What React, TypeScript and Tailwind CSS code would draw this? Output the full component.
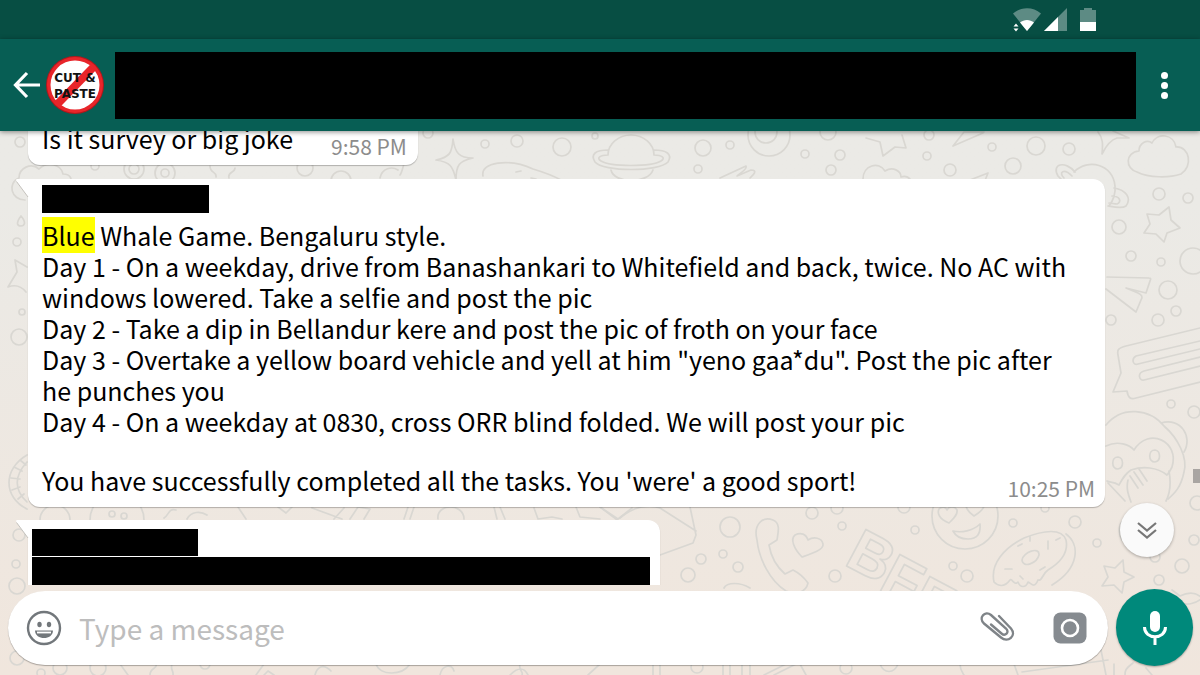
import { useState } from 'react';

const DOTS = [
  [20, 142, 5], [305, 168, 8], [341, 181, 10], [95, 166, 4], [428, 133, 5], [485, 144, 4], [517, 141, 6],
  [562, 147, 9], [595, 136, 3], [703, 148, 8], [730, 145, 4], [698, 169, 4], [769, 135, 21], [766, 132, 11],
  [828, 132, 8], [805, 154, 4], [840, 155, 5], [831, 170, 5], [929, 135, 5], [927, 156, 4], [992, 147, 4],
  [1036, 146, 9], [1069, 149, 6], [1013, 166, 8], [950, 170, 6], [1159, 194, 6], [1188, 198, 5], [1119, 227, 7],
  [1131, 256, 5], [1161, 262, 4], [1193, 261, 13], [1168, 290, 9], [1176, 311, 5], [1158, 320, 6], [1111, 320, 5],
  [1171, 404, 4], [1194, 412, 6], [812, 513, 6], [837, 508, 6], [842, 526, 4], [915, 530, 4], [904, 507, 6],
  [1013, 523, 4], [1075, 522, 6], [1097, 543, 4], [953, 566, 4], [967, 576, 6], [835, 576, 6], [1194, 540, 5],
  [1182, 566, 7], [1159, 580, 5], [1197, 503, 7], [1155, 557, 5], [1045, 508, 4], [19, 535, 6], [16, 564, 4],
  [17, 586, 8], [17, 658, 7], [60, 668, 7], [98, 668, 8], [41, 673, 4], [55, 520, 15], [117, 520, 27],
  [112, 514, 3], [124, 516, 3], [17, 242, 4], [22, 312, 3], [19, 337, 8], [730, 527, 10], [701, 559, 5],
  [688, 575, 7], [723, 554, 4], [738, 567, 5], [134, 169, 10], [134, 169, 5], [165, 173, 10], [165, 173, 4],
  [965, 516, 33], [846, 668, 6], [697, 667, 6], [205, 664, 5],
];

const DOODLES = [
  // clouds
  'M25 200c-14 0-18-17-6-22 0-10 12-16 20-9 8-8 22-5 24 5 8 0 10 6 6 10',
  'M1137 172c-12-3-12-20 2-21 0-8 8-12 13-8 5-11 22-9 24 4 14-1 17 20 5 27-12 4-32 4-44-2z',
  'M863 179c0-14 16-18 22-8 8-5 16 0 16 6 5-2 9 1 10 4',
  // planets
  'M608 155a23 20 0 0 1 46 0M608 150c-12 0-18 4-13 12 8 10 64 10 73 0 5-8-2-12-14-12M608 155c-8 0-12 3-7 6 10 6 50 6 60 0 5-3 1-6-7-6M611 170c3 14 37 14 42 0',
  'M1074 172c14-14 39-8 41 14 1 10-3 16-6 20M1075 172c-10-12-24-8-17 4 3 4 6 6 10 8M1114 188c12 2 18 10 12 18-4 3-12 1-18 0M1072 176c-8-8-14-4-8 2M1112 196c8 0 10 6 5 8-3 0-5-1-8-1',
  // sparkles and stars
  'M453 139c2 14 6 19 20 19-14 3-17 7-17 22-3-14-6-18-20-20 14-3 16-7 17-21z',
  'M866 138l14 4 3 14 12-9 11 1-4-13M953 146l11-14 20 0M953 146l30-13M1098 132c5 6 5 12 4 22 4-8 8-14 15-16h12l-16-7',
  'M1147 214l12 1 10-8 2 13 9 8-13 5-3 9-8-8-12-1 6-9z',
  'M27 267l-12-7 2 12-9 15c8-3 14 0 18 5',
  'M1104 566l11 2 8-8 1 12 10 5-10 5-2 11-8-8-12 1 6-9z',
  'M400 175c2-2 5-15 7-24',
  'M483 176c-3-14 26-18 50-7 10 3 19 6 28 11M516 172l5-1M531 178l5 1',
  'M720 178l26-12c2 3-6 7-9 10l14-6c8 0 1 6-1 8',
  'M970 180l18-7-4 10',
  'M210 166c0 8 7 5 6 11M235 168c0 5-8 4-6 10M380 178c2-10 12-12 18-8',
  // wedge and comb
  'M1107 277l42 1c2 0 2 1 1 3l-4 12-20-5 12 5c4 2 5 4 3 7l-5 12-30-23',
  'M1200 328l-74 18c-8 2-9 4-8 9l3 18-8 19 14-1c1 6 3 9 9 7l64-16M1200 341l-64 15c-5 3-3 10 2 8l62-15M1200 357l-56 14c-7 2-5 10 0 9l56-14',
  // monkey
  'M1106 425c16-20 44-16 58 1 14 12 24 32 20 46-3 15-9 21-16 27M1161 423c20-6 32 14 23 29M1106 446c12-6 24-1 28 4 15-24 46-8 38 17-3 6-4 7-5 8-10-8-24-9-36-5-6 4-8 8-12 15-6-4-9-2-12-4',
  'M1118 457c-7 0-7 12 0 12 6-1 6-11 0-12zM1155 450c-7 0-7 12 0 12 6-1 6-11 0-12zM1130 476l8 12M1134 472l9 13M1139 469l8 12M1169 471c3 16 0 24-3 30M1128 480c-2 8 0 14 3 22M1108 483l17 18M1126 520c-8 0-8 14-4 20',
  // smiley with heart eyes
  'M949 523c-10-4-12-10-10-14 3-3 7-2 8 1 2-4 8-4 10 0 1 5-4 9-8 13zM974 516c-6-4-10-10-7-14 4-2 7 0 8 3 3-4 8-3 9 1-1 4-5 7-10 10zM953 531c8 2 20 0 27-7 1 10-3 15-12 15-8 0-13-4-15-8z',
  // doughnut
  'M994 582c-4-18 10-34 30-44 20-8 38-10 42 2 3 14-8 24-18 30-6 4-6 12-10 10-4 10-8 2-10 2-2 6-8 6-10 0-4 4-6-4-8-2-6 8-12 6-16 2zM1066 534c14 10 14 34-14 51M1022 560c1-8 18-14 17-5-2 8-16 14-17 5zM1018 546l4-2M1012 569h-7M1030 541v-5M1048 549v-8M1056 540l4-2M1040 570l5-3M1020 576l3 3',
  // telephone
  'M757 540c-4-16 6-24 16-20 8 3 5 13 4 20l-8 5c2 12 8 22 16 29l8-4c6 3 10 6 15 13-2 9-12 13-22 8-16-10-27-32-29-51z',
  'M802 557c-8-8-12-18-7-22 6-3 11-1 13 5 6-4 14-2 15 4 1 6-12 10-21 13z',
  // envelope
  'M600 507l20 15M620 518c14-12 30-14 40-10l36 23M690 507l6 28-3 8-33 12',
  // bits behind and below the composer
  'M724 588c3-6 16-6 26 0M653 664v11M660 664v11M723 664v11M730 664v11M742 664v11M750 664v11M764 675l22-11M774 675l22-11M800 664l6 11M880 664c4 10 14 10 18 0',
  'M960 664c0 6 2 8 4 11M1014 664l4 11M1022 672l86-12M1100 645l6 30M1114 664v11M1172 590l8 6c8-4 16-4 22 2-6 6-16 8-24 4M1133 663c-8 6-8 8-8 12M1146 668l6 7',
  'M150 675c0-8 8-6 6-11M172 664c-2 6 2 7 1 11M256 675l8-11M264 675l4-4 6 4M315 675c2-8 8-12 16-4M120 664l8 11M376 664c4 12 26 12 34 0M440 675c2-10 12-12 14-4M520 664c-2 6 4 8 2 11M510 675c8-8 14-8 18 0M600 664l-12 11',
  'M164 518c6-4 4-10 12-8M187 519c4-8 14-8 20-4M238 507l8 12M278 507l8 6 6-6M312 508l30 11M344 508l-10 11M350 519l8-12 12 2-6 10M408 507l-4 12M414 507l-4 12M438 519c-2-16 26-16 26 0M494 507l3 12M500 507l5 12M534 508l4 11 14-2 10 2M576 507l4 10 20 2M600 507l18 12 14-11',
  // drum rim
  'M27 455c-24 14-24 42 0 54M27 462c-13 14-13 28 0 40M20 460l6 5M14 467l8 4M11 478l9 1M12 490l8-3M18 499l6-5M21 216c-6 8-3 10 0 10s6-3 0-10z',
];

const Wallpaper = () => (
  <svg
    aria-hidden="true"
    className="absolute inset-0 h-full w-full"
    viewBox="0 0 1200 675"
    preserveAspectRatio="xMidYMid slice"
    fill="none"
    stroke="#d9d7d2"
    strokeWidth="1.7"
    strokeLinecap="round"
    strokeLinejoin="round"
  >
    {DOTS.map(([cx, cy, r]) => (
      <circle key={`${cx}-${cy}-${r}`} cx={cx} cy={cy} r={r} />
    ))}
    {DOODLES.map((d) => (
      <path key={d} d={d} />
    ))}
    <g fontFamily="Liberation Sans, sans-serif" fontWeight="700" fontSize="60">
      <text x="843" y="564" transform="rotate(28 843 564)">B</text>
      <text x="877" y="589" transform="rotate(28 877 589)">F</text>
      <text x="907" y="611" transform="rotate(28 907 611)">F</text>
    </g>
  </svg>
);

const StatusBar = () => (
  <div className="flex h-[39px] items-start justify-end bg-[#074e43] pt-2 pr-[104px]">
    <svg className="h-6 w-[83px]" viewBox="0 0 83 24" fill="#fff" aria-label="Wi-Fi, signal and battery">
      <path d="M0 5.500C8-1.500 20-1.500 28 5.500L14 23z" opacity=".35" />
      <path d="M7 14.500C11 11 17 11 21 14.500L14 23z" />
      <path d="M.500 18.500h5L3 15.500zM.500 20.500h5L3 23.500z" />
      <path d="M54 0v23H31z" opacity=".35" />
      <path d="M45 9v14H31z" />
      <path d="M67 2h4V0h8v2h4v12H67z" opacity=".35" />
      <path d="M67 14h16v9H67z" />
    </svg>
  </div>
);

const GroupAvatar = () => (
  <svg className="size-[58px] shrink-0" viewBox="0 0 58 58" role="img" aria-label="Cut and paste">
    <circle cx="29" cy="29" r="29" fill="#b3161b" />
    <circle cx="29" cy="29" r="28" fill="#e8252a" />
    <circle cx="29" cy="29" r="24.500" fill="#fff" />
    <path d="M11.500 48L47 11.500" stroke="#e8252a" strokeWidth="8" />
    <g fontFamily="DejaVu Sans, sans-serif" fontWeight="700" fontSize="12" textAnchor="middle" fill="#111">
      <text x="29" y="26">CUT &amp;</text>
      <text x="29" y="42">PASTE</text>
    </g>
  </svg>
);

const Header = () => (
  <header className="relative z-10 flex h-[92px] items-center bg-[#075e54] pl-3 shadow-[0_1px_5px_rgba(0,0,0,0.45)]">
    <button aria-label="Back" className="mr-1 shrink-0">
      <svg className="size-[30px]" viewBox="0 0 30 30" fill="none" stroke="#fff" strokeWidth="3.200">
        <path d="M28 15H4M15 3L3.500 15 15 27" />
      </svg>
    </button>
    <GroupAvatar />
    <div className="ml-[11px] h-[67px] flex-1 bg-black" />
    <button aria-label="More options" className="flex w-16 flex-col items-center gap-[3px] pr-2">
      <span className="size-[7px] rounded-full bg-white" />
      <span className="size-[7px] rounded-full bg-white" />
      <span className="size-[7px] rounded-full bg-white" />
    </button>
  </header>
);

const BubbleTail = () => (
  <svg className="absolute top-0 -left-3 h-5 w-4" viewBox="0 0 16 20" aria-hidden="true">
    <path d="M1 0h15v20h-4V18L.500 2.500C-.200 1 .200 0 1 0z" fill="#fff" />
    <path d="M.500 2.500L12 18" stroke="#c4c1bc" strokeWidth="1" />
  </svg>
);

const Messages = () => (
  <main className="relative flex min-h-0 flex-1 flex-col items-start overflow-hidden pr-[95px] pl-7 text-[25px] leading-[31px] text-black">
    <article className="-mt-4 flex shrink-0 items-end gap-[38px] rounded-xl bg-white pt-2 pr-[11px] pb-[11px] pl-[14px] shadow-[0_1px_1px_rgba(0,0,0,0.25)]">
      <p>Is it survey or big joke</p>
      <time className="-mb-1 text-[21px] leading-6 text-[#8c8c8c]">9:58 PM</time>
    </article>

    <article className="relative mt-[14px] w-full shrink-0 rounded-xl rounded-tl-none bg-white pt-[6px] pr-6 pb-[11px] pl-[14px] shadow-[0_1px_1px_rgba(0,0,0,0.25)]">
      <BubbleTail />
      <div className="mb-[7px] h-7 w-[167px] bg-black" />
      <p>
        <mark className="bg-[#ffff00] text-black">Blue</mark> Whale Game. Bengaluru style.
      </p>
      <p>Day 1 - On a weekday, drive from Banashankari to Whitefield and back, twice. No AC with windows lowered. Take a selfie and post the pic</p>
      <p>Day 2 - Take a dip in Bellandur kere and post the pic of froth on your face</p>
      <p>Day 3 - Overtake a yellow board vehicle and yell at him "yeno gaa*du". Post the pic after he punches you</p>
      <p>Day 4 - On a weekday at 0830, cross ORR blind folded. We will post your pic</p>
      <div className="mt-7 flex items-end justify-between">
        <p>You have successfully completed all the tasks. You 'were' a good sport!</p>
        <time className="-mr-[14px] -mb-1 text-[21px] leading-6 text-[#8c8c8c]">10:25 PM</time>
      </div>
    </article>

    <article className="relative mt-[13px] w-[632px] shrink-0 rounded-tr-xl bg-white pt-[9px] pr-[10px] pl-1 shadow-[0_1px_1px_rgba(0,0,0,0.25)]">
      <BubbleTail />
      <div className="mb-px h-[27px] w-[166px] bg-black" />
      <div className="h-[29px] bg-black" />
    </article>
  </main>
);

const Composer = () => {
  const [text, setText] = useState('');

  return (
    <form className="relative flex items-center gap-2 pt-1 pr-[7px] pb-[9px] pl-2" onSubmit={(e) => e.preventDefault()}>
      <div className="flex h-[74px] min-w-0 flex-1 items-center rounded-full bg-white pr-[21px] pl-[18px] shadow-[0_1px_1px_rgba(0,0,0,0.3)]">
        <button type="button" aria-label="Emoji" className="shrink-0">
          <svg className="size-9" viewBox="0 0 36 36" fill="none" stroke="#72777b" strokeWidth="2.400">
            <circle cx="18" cy="18" r="16" />
            <ellipse cx="13.500" cy="14.500" rx="2.200" ry="2.700" fill="#72777b" stroke="none" />
            <ellipse cx="23" cy="14.500" rx="2.200" ry="2.700" fill="#72777b" stroke="none" />
            <path d="M9 20.500h18c0 10-18 10-18 0z" fill="#72777b" stroke="none" />
            <path d="M11 22.500h14" stroke="#fff" strokeWidth="1.800" />
          </svg>
        </button>
        <input
          aria-label="Type a message"
          placeholder="Type a message"
          value={text}
          onChange={(e) => setText(e.target.value)}
          className="ml-[17px] h-12 min-w-0 flex-1 bg-transparent text-[28px] leading-[48px] outline-none placeholder:text-[#bdbdbd]"
        />
        <button type="button" aria-label="Attach" className="mr-[38px] shrink-0">
          <svg className="size-9" viewBox="0 0 36 36" fill="none" stroke="#7f8488" strokeWidth="2.400" strokeLinecap="round">
            <path d="M20 6L32 18.500c6 7-3 15-10 9L5 13.500C-1 8 6 0 12 5L27 18.500c4 4-1 8-4.500 5L12 14.500" />
          </svg>
        </button>
        <button type="button" aria-label="Camera" className="shrink-0">
          <svg className="h-8 w-[34px]" viewBox="0 0 34 32">
            <rect x=".500" y=".500" width="33" height="31" rx="7" fill="#868b90" />
            <circle cx="17" cy="16" r="8" fill="none" stroke="#fff" strokeWidth="2.600" />
          </svg>
        </button>
      </div>
      <button type="button" aria-label="Record voice message" className="flex size-[77px] shrink-0 items-center justify-center rounded-full bg-[#00897b] shadow-[0_1px_2px_rgba(0,0,0,0.3)]">
        <svg className="h-[34px] w-6" viewBox="0 0 24 34" fill="none" stroke="#fff">
          <rect x="7" y="0" width="10" height="21" rx="5" fill="#fff" stroke="none" />
          <path d="M1.500 16c0 13 21 13 21 0M12 25v9" strokeWidth="3" />
        </svg>
      </button>
    </form>
  );
};

export default function App() {
  return (
    <div className="relative flex h-screen flex-col overflow-hidden bg-linear-to-b from-[#ebeae6] from-30% to-[#f0e6dd] font-['Noto_Sans_CJK_SC',sans-serif]">
      <Wallpaper />
      <div className="relative z-10">
        <StatusBar />
        <Header />
      </div>
      <Messages />
      <Composer />
      <button aria-label="Scroll to latest" className="absolute right-[26px] bottom-[118px] flex size-[54px] items-center justify-center rounded-full bg-[#fafafa] shadow-[0_1px_3px_rgba(0,0,0,0.3)]">
        <svg className="size-5" viewBox="0 0 20 20" fill="none" stroke="#777" strokeWidth="2.200">
          <path d="M1 3l9 7.500L19 3M1 10l9 7.500L19 10" />
        </svg>
      </button>
      <div className="absolute right-0 bottom-48 h-[14px] w-[7px] bg-[#a9a5a2]" />
    </div>
  );
}
